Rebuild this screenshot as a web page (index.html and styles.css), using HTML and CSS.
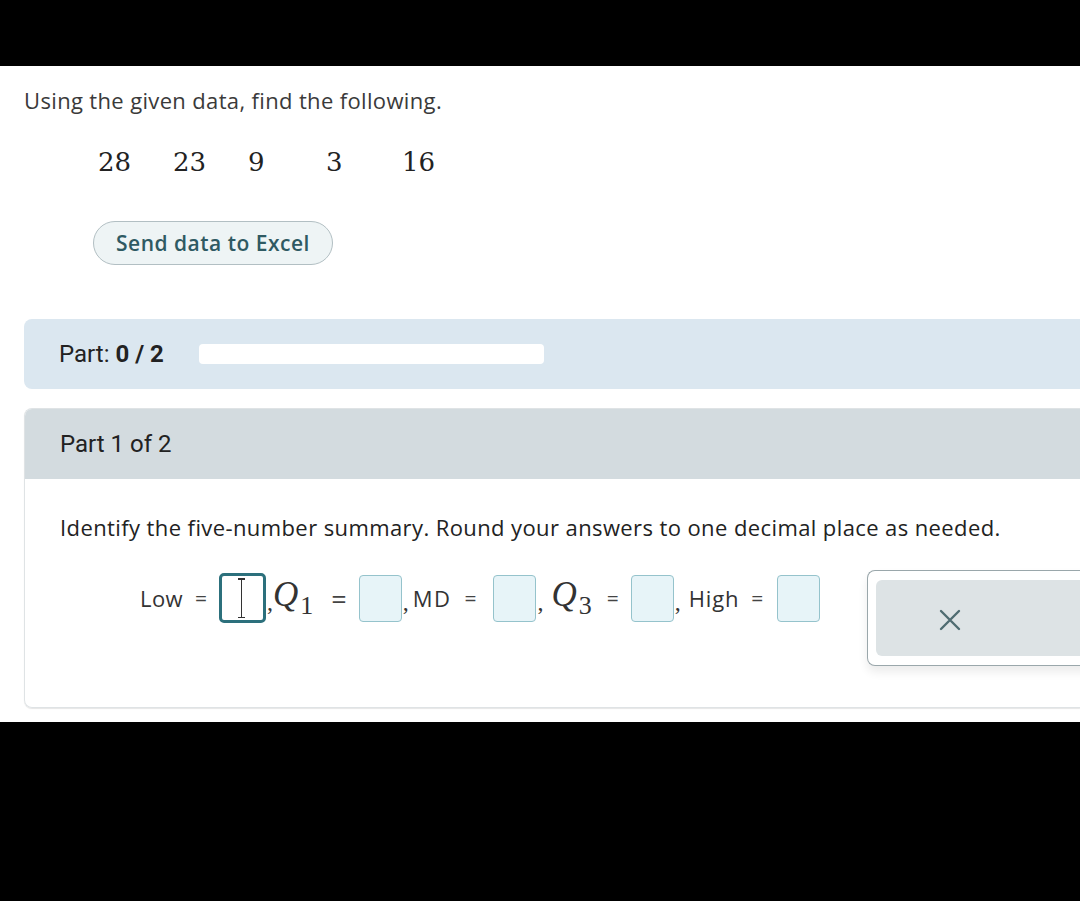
FILE: index.html
```html
<!DOCTYPE html>
<html>
<head>
<meta charset="utf-8">
<link rel="stylesheet" href="styles.css">
</head>
<body>
<div class="screen">
  <div class="topbar"></div>
  <main class="page">
    <p class="prompt">Using the given data, find the following.</p>
    <div class="data">
      <span>28</span><span>23</span><span>9</span><span>3</span><span>16</span>
    </div>
    <button class="excel">Send data to Excel</button>
    <div class="progress">
      <span class="plabel">Part: <b>0 / 2</b></span>
      <div class="track"></div>
    </div>
    <section class="part">
      <header class="part-head">Part 1 of 2</header>
      <div class="part-body">
        <p class="instr">Identify the five-number summary. Round your answers to one decimal place as needed.</p>
        <div class="row">
          <div class="formula">
            <span class="word low">Low</span>
            <span class="eq e1">=</span>
            <span class="box active"><span class="ibeam"></span></span>
            <span class="comma">,</span>
            <span class="q">Q<sub>1</sub></span>
            <span class="eq e2">=</span>
            <span class="box"></span>
            <span class="comma">,</span>
            <span class="word md">MD</span>
            <span class="eq e3">=</span>
            <span class="box"></span>
            <span class="comma">,</span>
            <span class="q q3">Q<sub>3</sub></span>
            <span class="eq e4">=</span>
            <span class="box"></span>
            <span class="comma">,</span>
            <span class="word high">High</span>
            <span class="eq e5">=</span>
            <span class="box"></span>
          </div>
          <div class="tools">
            <button class="clear">
              <svg width="22" height="22" viewBox="0 0 22 22"><path d="M2 2 L20 20 M20 2 L2 20" stroke="#4f6c72" stroke-width="2.4" fill="none" stroke-linecap="round"/></svg>
            </button>
          </div>
        </div>
      </div>
    </section>
  </main>
</div>
</body>
</html>
```
FILE: styles.css
```css
html, body { margin: 0; padding: 0; background: #000; }
.screen { width: 1080px; height: 901px; overflow: hidden; background: #000; }
.topbar { height: 66px; background: #000; }
.page {
  height: 656px;
  background: #fff;
  padding: 20px 0 0 24px;
  box-sizing: border-box;
  overflow: hidden;
  font-family: "Open Sans", "Liberation Sans", sans-serif;
  color: #333;
}
.prompt { margin: 0; font-size: 22px; line-height: 28px; letter-spacing: 0.35px; color: #3a3a3a; }
.data {
  display: grid;
  grid-template-columns: 75px 75px 78px 76px auto;
  margin: 34px 0 0 74px;
  font-family: "DejaVu Serif", "Liberation Serif", serif;
  font-size: 26px;
  line-height: 28px;
  color: #222;
}
.excel {
  display: block;
  margin: 45px 0 0 69px;
  width: 240px;
  height: 44px;
  border-radius: 22px;
  border: 1.5px solid #b2bfc3;
  background: #eef4f5;
  color: #2f5a63;
  font-family: "Open Sans", "Liberation Sans", sans-serif;
  font-weight: 600;
  font-size: 21px;
  letter-spacing: 0.5px;
  padding: 0;
}
.progress {
  margin-top: 54px;
  height: 70px;
  background: #dbe7f0;
  border-radius: 8px 0 0 8px;
  display: flex;
  align-items: center;
  padding-left: 35px;
}
.plabel { font-family: Roboto, "Liberation Sans", sans-serif; font-size: 24px; color: #222; width: 140px; }
.plabel b { font-weight: 700; }
.track { width: 345px; height: 20px; background: #fff; border-radius: 4px; }
.part {
  margin-top: 19px;
  height: 300px;
  border: 1px solid #dfe3e5;
  border-right: none;
  border-radius: 8px 0 0 8px;
  box-sizing: border-box;
  overflow: hidden;
  box-shadow: 0 1px 1px #e6e6e6;
}
.part-head {
  height: 70px;
  background: #d3dbdf;
  display: flex;
  align-items: center;
  padding-left: 35px;
  font-family: Roboto, "Liberation Sans", sans-serif;
  font-size: 24px;
  color: #222;
}
.part-body { padding: 34px 0 0 35px; }
.instr { margin: 0; font-size: 22px; line-height: 28px; color: #222; letter-spacing: 0.4px; }
.row { display: flex; align-items: flex-start; margin-top: 29px; }
.formula {
  display: flex;
  align-items: center;
  margin-left: 80px;
  margin-top: 3px;
  color: #333;
}
.word { font-family: "Open Sans", "Liberation Sans", sans-serif; font-size: 22px; letter-spacing: 0.4px; }
.eq { font-size: 21px; color: #444; }
.e1 { margin: 0 12px 0 12px; }
.e2 { font-size: 27px; margin: 0 12px 0 18px; }
.e3 { margin: 0 17px 0 13px; }
.e4 { margin: 0 12px 0 15px; }
.e5 { margin: 0 14px 0 12px; }
.box {
  width: 43px;
  height: 47px;
  border: 1.5px solid #95c3cc;
  background: #e7f4f8;
  border-radius: 4px;
  box-sizing: border-box;
  position: relative;
}
.box.active {
  width: 47px;
  height: 50px;
  border: 3px solid #2c707c;
  background: #fff;
  border-radius: 5px;
}
.ibeam {
  position: absolute;
  left: 19px;
  top: 2px;
  width: 1.5px;
  height: 40px;
  background: #333;
}
.ibeam::before, .ibeam::after {
  content: "";
  position: absolute;
  left: -3px;
  width: 7px;
  height: 1.5px;
  background: #333;
}
.ibeam::before { top: 0; }
.ibeam::after { bottom: 0; }
.comma { font-family: "Liberation Serif", serif; font-size: 24px; margin: 8px 0 0 1px; color: #333; }
.q {
  font-family: "Liberation Serif", "DejaVu Serif", serif;
  font-style: italic;
  font-size: 35px;
  color: #333;
  margin-left: 0;
}
.q sub { font-style: normal; font-size: 26px; vertical-align: -8px; margin-left: 2px; }
.md { margin-left: 4px; letter-spacing: 1.5px; }
.q3 { margin-left: 8px; }
.high { margin-left: 8px; letter-spacing: 0.8px; }
.tools {
  margin-left: 47px;
  width: 240px;
  height: 96px;
  border: 1.5px solid #9aa7ab;
  border-right: none;
  border-radius: 8px 0 0 8px;
  box-sizing: border-box;
  background: #fff;
  padding: 9px 0 0 8px;
  box-shadow: 0 6px 10px rgba(0,0,0,0.08);
}
.clear {
  width: 240px;
  height: 76px;
  border: none;
  border-radius: 6px;
  background: #dde3e5;
  display: flex;
  align-items: center;
  padding: 0 0 0 63px;
}
.clear svg { margin-top: 4px; }
```
